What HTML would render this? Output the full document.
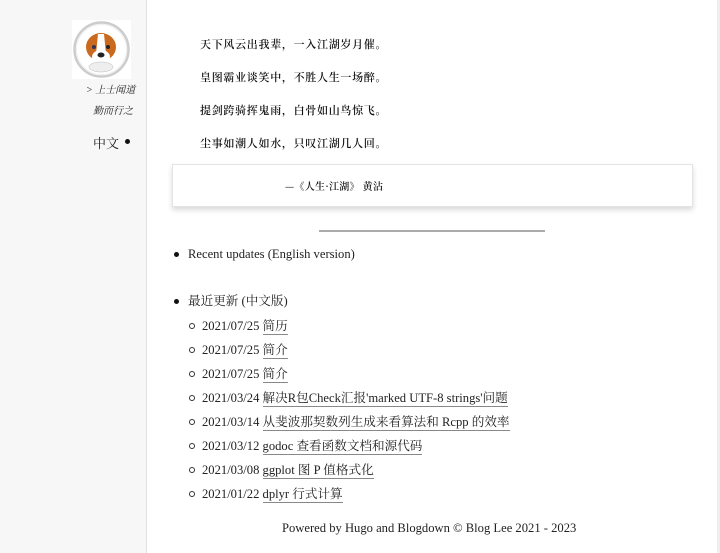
<!DOCTYPE html>
<html><head><meta charset="utf-8"><style>
html,body{margin:0;padding:0;width:720px;height:553px;overflow:hidden;background:#fff;}
body{position:relative;font-family:"Liberation Serif","Noto Serif CJK SC",serif;color:#222;}
.side{position:absolute;left:0;top:0;width:146px;height:553px;background:#f7f7f7;border-right:1px solid #e2e2e2;}
.abs{position:absolute;white-space:nowrap;}
.poem{font-family:"Noto Serif CJK SC",serif;font-size:11px;letter-spacing:0.7px;color:#111;font-weight:600;}
.box{position:absolute;left:172px;top:164px;width:519px;height:41px;border:1px solid #e4e4e4;box-shadow:0 3px 5px rgba(0,0,0,0.15);background:#fff;}
.li{position:absolute;font-size:12.6px;white-space:nowrap;line-height:16px;}
.dot{position:absolute;width:5px;height:5px;border-radius:50%;background:#111;}
.circ{position:absolute;width:4px;height:4px;border-radius:50%;border:1px solid #333;}
.u{border-bottom:1px solid #888;padding-bottom:1px;}
</style></head><body>
<div class="side"></div>
<div class="abs" style="left:72px;top:20px;width:59px;height:59px;background:#fff;"></div>
<svg class="abs" style="left:72px;top:20px" width="60" height="60" viewBox="0 0 60 60">
<circle cx="29.5" cy="29.5" r="27" fill="#fff" stroke="#ccc" stroke-width="2.5"/>
<circle cx="29.5" cy="29.5" r="25" fill="none" stroke="#eee" stroke-width="1"/>
<ellipse cx="29" cy="27" rx="15" ry="14" fill="#c96a1e"/>
<path d="M26 14 L32 14 L34 34 L24 34 Z" fill="#fff"/>
<ellipse cx="29" cy="37" rx="9" ry="7" fill="#fff"/>
<ellipse cx="29" cy="35" rx="3.5" ry="2.5" fill="#222"/>
<circle cx="22" cy="27" r="2" fill="#335"/><circle cx="36" cy="27" r="2" fill="#222"/>
<ellipse cx="29" cy="47" rx="12" ry="5" fill="#eee" stroke="#bbb" stroke-width=".5"/>
</svg>
<div class="abs" style="left:86px;top:81px;font-size:10px;font-style:italic;color:#222;">&gt; 上士闻道</div>
<div class="abs" style="left:93px;top:102px;font-size:10px;font-style:italic;color:#222;">勤而行之</div>
<div class="abs" style="left:93px;top:133px;font-size:13px;">中文</div>
<div class="dot" style="left:125px;top:139px;"></div>

<div class="abs poem" style="left:200px;top:36px;">天下风云出我辈，一入江湖岁月催。</div>
<div class="abs poem" style="left:200px;top:69px;">皇图霸业谈笑中，不胜人生一场醉。</div>
<div class="abs poem" style="left:200px;top:102px;">提剑跨骑挥鬼雨，白骨如山鸟惊飞。</div>
<div class="abs poem" style="left:200px;top:135px;">尘事如潮人如水，只叹江湖几人回。</div>
<div class="box"></div>
<div class="abs poem" style="left:285px;top:178px;font-size:10px;letter-spacing:0.3px;">—《人生·江湖》 黄沾</div>
<div class="abs" style="left:319px;top:230px;width:226px;height:2px;background:#aaa;"></div>

<div class="dot" style="left:174px;top:252px;"></div>
<div class="li" style="left:188px;top:246px;">Recent updates (English version)</div>
<div class="dot" style="left:174px;top:299px;"></div>
<div class="li" style="left:188px;top:293px;">最近更新 (中文版)</div>

<div class="circ" style="left:189px;top:323px;"></div><div class="li" style="left:202px;top:318px;">2021/07/25 <span class="u">简历</span></div>
<div class="circ" style="left:189px;top:347px;"></div><div class="li" style="left:202px;top:342px;">2021/07/25 <span class="u">简介</span></div>
<div class="circ" style="left:189px;top:371px;"></div><div class="li" style="left:202px;top:366px;">2021/07/25 <span class="u">简介</span></div>
<div class="circ" style="left:189px;top:395px;"></div><div class="li" style="left:202px;top:390px;">2021/03/24 <span class="u">解决R包Check汇报'marked UTF-8 strings'问题</span></div>
<div class="circ" style="left:189px;top:419px;"></div><div class="li" style="left:202px;top:414px;">2021/03/14 <span class="u">从斐波那契数列生成来看算法和 Rcpp 的效率</span></div>
<div class="circ" style="left:189px;top:443px;"></div><div class="li" style="left:202px;top:438px;">2021/03/12 <span class="u">godoc 查看函数文档和源代码</span></div>
<div class="circ" style="left:189px;top:467px;"></div><div class="li" style="left:202px;top:462px;">2021/03/08 <span class="u">ggplot 图 P 值格式化</span></div>
<div class="circ" style="left:189px;top:491px;"></div><div class="li" style="left:202px;top:486px;">2021/01/22 <span class="u">dplyr 行式计算</span></div>

<div class="li" style="left:282px;top:520px;">Powered by Hugo and Blogdown © Blog Lee 2021 - 2023</div>
<div class="abs" style="left:717px;top:0;width:3px;height:553px;background:#eee;"></div>
</body></html>
